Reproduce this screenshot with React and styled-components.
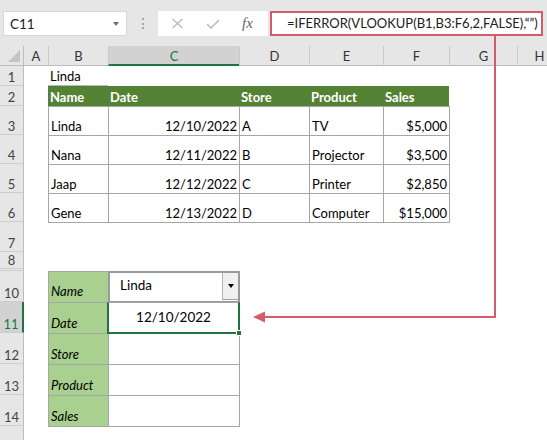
import styled, { createGlobalStyle, css } from 'styled-components';

const GREEN = '#217346';
const RED = '#d25b6c';
const LINE = '#a6a6a6';
const HEAD_BG = '#e6e6e6';
const TEMPLATE = '24px 24px 60px 131px 70px 74px 66px 68px 44px';

const COLUMNS = ['A', 'B', 'C', 'D', 'E', 'F', 'G', 'H'];
const HEADERS = ['Name', 'Date', 'Store', 'Product', 'Sales'];
const SALES = [
    ['Linda', '12/10/2022', 'A', 'TV', '$5,000'],
    ['Nana', '12/11/2022', 'B', 'Projector', '$3,500'],
    ['Jaap', '12/12/2022', 'C', 'Printer', '$2,850'],
    ['Gene', '12/13/2022', 'D', 'Computer', '$15,000'],
];

const GlobalStyle = createGlobalStyle`
    *, *::before, *::after {
        box-sizing: border-box;
    }
    html, body {
        margin: 0;
        background: #fff;
    }
    body {
        font-family: Lato, "Liberation Sans", sans-serif;
        color: #000;
    }
`;

const Screen = styled.div`
    position: relative;
    width: 547px;
    height: 440px;
    overflow: hidden;
    background: #fff;
`;

const FormulaBar = styled.div`
    display: flex;
    align-items: center;
    height: 46px;
    padding: 1px 0 0 3px;
    background: ${HEAD_BG};
`;

const NameBox = styled.div`
    display: flex;
    align-items: center;
    justify-content: space-between;
    width: 124px;
    height: 25px;
    padding: 0 7px 0 6px;
    background: #fff;
    border: 1px solid #d6d6d6;
    font-size: 13.5px;
    color: #222;
`;

const Caret = styled.span`
    width: 0;
    height: 0;
    border-left: ${(p) => p.$size}px solid transparent;
    border-right: ${(p) => p.$size}px solid transparent;
    border-top: ${(p) => Math.round(p.$size * 1.1)}px solid ${(p) => p.$color};
`;

const Grip = styled.div`
    display: flex;
    flex-direction: column;
    align-items: center;
    gap: 2.5px;
    width: 31px;
    span {
        width: 2px;
        height: 2px;
        background: #a8a8a8;
    }
`;

const FxBox = styled.div`
    display: grid;
    grid-template-columns: repeat(3, 35px);
    align-items: center;
    justify-items: center;
    width: 110px;
    height: 25px;
    margin-right: 2px;
    padding-left: 2px;
    background: #fff;
`;

const FxLabel = styled.span`
    font-family: "Liberation Serif", serif;
    font-style: italic;
    font-size: 15px;
    color: #666;
`;

const FormulaInput = styled.div`
    display: flex;
    align-items: center;
    width: 273px;
    height: 25px;
    padding: 0 0 1px 15px;
    background: #fff;
    border: 2px solid ${RED};
    font-size: 13px;
    color: #222;
    white-space: nowrap;
    overflow: hidden;
`;

const Row = styled.div`
    display: grid;
    grid-template-columns: ${TEMPLATE};
    grid-template-rows: ${(p) => p.$h}px;
    height: ${(p) => p.$h}px;
`;

const Corner = styled.div`
    display: flex;
    align-items: flex-end;
    justify-content: flex-end;
    padding: 0 3px 3px 0;
    background: ${HEAD_BG};
    border-right: 1px solid #bdbdbd;
    border-bottom: 1px solid #bdbdbd;
    &::after {
        content: '';
        border-left: 12px solid transparent;
        border-bottom: 12px solid #c4c4c4;
    }
`;

const ColHead = styled.div`
    display: flex;
    align-items: center;
    justify-content: center;
    padding-top: 1px;
    font-size: 13px;
    color: ${(p) => (p.$active ? GREEN : '#333')};
    background: ${(p) => (p.$active ? '#d2d2d2' : HEAD_BG)};
    border-left: ${(p) => (p.$first ? 'none' : '1px solid #cacaca')};
    border-bottom: ${(p) => (p.$active ? `2px solid ${GREEN}` : '1px solid #bdbdbd')};
`;

const RowHead = styled.div`
    grid-column: 1;
    display: flex;
    align-items: flex-end;
    justify-content: center;
    overflow: hidden;
    padding-bottom: 1px;
    font-size: 13px;
    line-height: 14px;
    color: ${(p) => (p.$active ? GREEN : '#444')};
    background: ${(p) => (p.$active ? '#d2d2d2' : HEAD_BG)};
    border-right: ${(p) => (p.$active ? `2px solid ${GREEN}` : '1px solid #bdbdbd')};
    border-bottom: 1px solid #cdcdcd;
`;

const Cell = styled.div`
    grid-column: ${(p) => p.$col};
    display: flex;
    align-items: flex-end;
    justify-content: ${(p) => (p.$align === 'right' ? 'flex-end' : 'flex-start')};
    min-width: 0;
    padding: 0 2px ${(p) => p.$pb ?? 1}px;
    font-size: 13px;
    line-height: 15px;
    white-space: nowrap;
    color: ${(p) => p.$color || '#000'};
    background: ${(p) => p.$fill || 'transparent'};
    font-weight: ${(p) => (p.$bold ? 700 : 400)};
    font-style: ${(p) => (p.$italic ? 'italic' : 'normal')};
    ${(p) =>
        p.$boxed &&
        css`
            border: 1px solid ${LINE};
            margin: 0 -1px -1px 0;
        `}
    ${(p) =>
        p.$underline &&
        css`
            border-bottom: 1px solid #b8b8b8;
        `}
`;

const Selected = styled.div`
    grid-column: 4;
    position: relative;
    z-index: 1;
    display: flex;
    align-items: center;
    justify-content: center;
    margin: 0 -1px -1px -1px;
    padding-bottom: 1px;
    font-size: 13.5px;
    border: 2px solid ${GREEN};
    border-top: 1px solid ${LINE};
`;

const FillHandle = styled.span`
    position: absolute;
    right: -4px;
    bottom: -4px;
    width: 6px;
    height: 6px;
    background: ${GREEN};
    border: 1px solid #fff;
`;

const Combo = styled.div`
    grid-column: 4;
    display: flex;
    align-items: stretch;
    margin: 0 -1px -1px 0;
    background: #fff;
    border: 2px solid #9a9a9a;
`;

const ComboText = styled.div`
    flex: 1;
    display: flex;
    align-items: center;
    padding: 0 0 4px 10px;
    font-size: 13.5px;
`;

const ComboButton = styled.div`
    display: flex;
    align-items: center;
    justify-content: center;
    width: 16px;
    margin: 0 0 1px;
    background: #f0f0f0;
    border-left: 1px solid #b4b4b4;
    border-bottom: 1px solid #a0a0a0;
`;

const Overlay = styled.svg`
    position: absolute;
    top: 0;
    left: 0;
    pointer-events: none;
`;

function SheetRow({ n, h, active, children }) {
    return (
        <Row $h={h}>
            <RowHead $active={active}>{n}</RowHead>
            {children}
        </Row>
    );
}

function FormulaControls() {
    return (
        <FormulaBar>
            <NameBox>
                <span>C11</span>
                <Caret $size={3.5} $color="#6d6d6d" />
            </NameBox>
            <Grip>
                <span />
                <span />
                <span />
            </Grip>
            <FxBox>
                <svg width="13" height="11" viewBox="0 0 13 11">
                    <path d="M1.5 1 L11.5 10 M11.5 1 L1.5 10" stroke="#bdbdbd" strokeWidth="1.5" fill="none" />
                </svg>
                <svg width="14" height="10" viewBox="0 0 14 10">
                    <path d="M1 5 L5 9 L13 1" stroke="#bdbdbd" strokeWidth="1.6" fill="none" />
                </svg>
                <FxLabel>fx</FxLabel>
            </FxBox>
            <FormulaInput>=IFERROR(VLOOKUP(B1,B3:F6,2,FALSE),“”)</FormulaInput>
        </FormulaBar>
    );
}

export default function App() {
    return (
        <Screen>
            <GlobalStyle />
            <FormulaControls />
            <Row $h={20}>
                <Corner />
                {COLUMNS.map((c, i) => (
                    <ColHead key={c} $first={i === 0} $active={c === 'C'}>
                        {c}
                    </ColHead>
                ))}
            </Row>
            <SheetRow n={1} h={20}>
                <Cell $col={3} $underline>
                    Linda
                </Cell>
            </SheetRow>
            <SheetRow n={2} h={20}>
                {HEADERS.map((t, i) => (
                    <Cell key={t} $col={i + 3} $fill="#548235" $color="#fff" $bold>
                        {t}
                    </Cell>
                ))}
            </SheetRow>
            {SALES.map((r, i) => (
                <SheetRow key={r[0]} n={i + 3} h={29}>
                    <Cell $col={3} $boxed>{r[0]}</Cell>
                    <Cell $col={4} $boxed $align="right">{r[1]}</Cell>
                    <Cell $col={5} $boxed>{r[2]}</Cell>
                    <Cell $col={6} $boxed>{r[3]}</Cell>
                    <Cell $col={7} $boxed $align="right">{r[4]}</Cell>
                </SheetRow>
            ))}
            <SheetRow n={7} h={30} />
            <SheetRow n={8} h={17} />
            <SheetRow n="" h={2} />
            <SheetRow n={10} h={31}>
                <Cell $col={3} $boxed $fill="#a9d08e" $italic $pb={3}>
                    Name
                </Cell>
                <Combo>
                    <ComboText>Linda</ComboText>
                    <ComboButton>
                        <Caret $size={3.5} $color="#000" />
                    </ComboButton>
                </Combo>
            </SheetRow>
            <SheetRow n={11} h={31} active>
                <Cell $col={3} $boxed $fill="#a9d08e" $italic $pb={2}>
                    Date
                </Cell>
                <Selected>
                    12/10/2022
                    <FillHandle />
                </Selected>
            </SheetRow>
            {['Store', 'Product', 'Sales'].map((t, i) => (
                <SheetRow key={t} n={i + 12} h={31}>
                    <Cell $col={3} $boxed $fill="#a9d08e" $italic $pb={2}>
                        {t}
                    </Cell>
                    <Cell $col={4} $boxed />
                </SheetRow>
            ))}
            <SheetRow n="" h={31} />
            <Overlay width="547" height="440">
                <polyline points="495,36 495,317 263,317" fill="none" stroke={RED} strokeWidth="2" />
                <polygon points="253,317 265,311.5 265,322.5" fill={RED} />
            </Overlay>
        </Screen>
    );
}
